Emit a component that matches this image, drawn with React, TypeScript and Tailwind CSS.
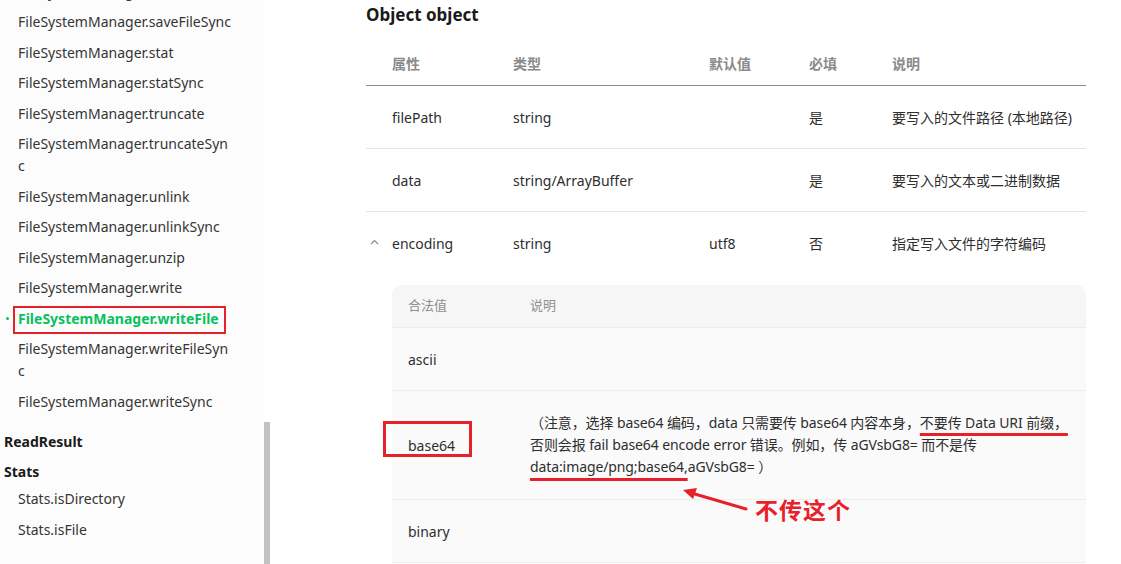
import React from 'react';

const FONT = '"Noto Sans", "Noto Sans CJK SC", sans-serif';

type NavItem = { label: React.ReactNode; active?: boolean };

const navItems: NavItem[] = [
  { label: 'FileSystemManager.saveFile' },
  { label: 'FileSystemManager.saveFileSync' },
  { label: 'FileSystemManager.stat' },
  { label: 'FileSystemManager.statSync' },
  { label: 'FileSystemManager.truncate' },
  { label: <>FileSystemManager.truncateSyn<br />c</> },
  { label: 'FileSystemManager.unlink' },
  { label: 'FileSystemManager.unlinkSync' },
  { label: 'FileSystemManager.unzip' },
  { label: 'FileSystemManager.write' },
  { label: 'FileSystemManager.writeFile', active: true },
  { label: <>FileSystemManager.writeFileSyn<br />c</> },
  { label: 'FileSystemManager.writeSync' },
];

function Sidebar() {
  return (
    <aside className="w-[264px] shrink-0 bg-[#fcfcfc] text-[14px] text-[#353535] overflow-hidden">
      <ul className="-mt-[23.75px]">
        {navItems.map((item, i) => (
          <li key={i} className="relative pl-[18px] py-[4.25px] leading-[22px] whitespace-nowrap">
            {item.active ? (
              <>
                <span className="absolute left-[6px] top-[14px] w-[3px] h-[3px] rounded-full bg-[#07c160]" />
                <span className="relative font-bold text-[#07c160]">
                  FileSystemManager.writeFile
                  {/* annotation box */}
                  <span className="absolute -left-[5px] -top-[3px] w-[213px] h-[28px] border-[2.5px] border-[#e8202a]" />
                </span>
              </>
            ) : (
              item.label
            )}
          </li>
        ))}
      </ul>
      <div className="mt-[10px] pl-[4px] py-[4px] leading-[22px] font-bold text-[#1a1a1a]">ReadResult</div>
      <div className="pl-[4px] pt-[4px] pb-[1px] leading-[22px] font-bold text-[#1a1a1a]">Stats</div>
      <ul>
        <li className="pl-[18px] py-[4.25px] leading-[22px]">Stats.isDirectory</li>
        <li className="pl-[18px] py-[4.25px] leading-[22px]">Stats.isFile</li>
      </ul>
    </aside>
  );
}

function ScrollTrack() {
  return (
    <div className="w-[6px] shrink-0 flex flex-col">
      <div className="h-[422px]" />
      <div className="flex-1 bg-[#c1c1c1]" />
    </div>
  );
}

const COLS = 'grid grid-cols-[147px_196px_100px_83px_1fr] items-center';

function Chevron() {
  return (
    <svg className="absolute left-[4px] top-[27px]" width="9" height="6" viewBox="0 0 9 6" fill="none">
      <polyline points="1,5 4.5,1.5 8,5" stroke="#8a8a8a" strokeWidth="1.2" />
    </svg>
  );
}

function MainTable() {
  const rows = [
    { name: 'filePath', type: 'string', def: '', req: '是', desc: '要写入的文件路径 (本地路径)' },
    { name: 'data', type: 'string/ArrayBuffer', def: '', req: '是', desc: '要写入的文本或二进制数据' },
  ];
  return (
    <div className="w-[720px] text-[14px] text-[#2e2e2e]">
      <div className={`${COLS} mt-[11px] h-[45px] border-b border-[#8c8c8c] font-semibold text-[#8a8a8a]`}>
        <div className="pl-[26px]">属性</div>
        <div>类型</div>
        <div>默认值</div>
        <div>必填</div>
        <div>说明</div>
      </div>
      {rows.map((r) => (
        <div key={r.name} className={`${COLS} h-[63px] border-b border-[#e5e5e5]`}>
          <div className="pl-[26px]">{r.name}</div>
          <div>{r.type}</div>
          <div>{r.def}</div>
          <div>{r.req}</div>
          <div>{r.desc}</div>
        </div>
      ))}
      <div className={`${COLS} relative h-[62px]`}>
        <Chevron />
        <div className="pl-[26px]">encoding</div>
        <div>string</div>
        <div>utf8</div>
        <div>否</div>
        <div>指定写入文件的字符编码</div>
      </div>
      <EnumTable />
    </div>
  );
}

function EnumTable() {
  return (
    <div className="ml-[26px] mt-[11px] rounded-t-[10px] bg-[#fafafa]">
      <div className="grid grid-cols-[138px_1fr] items-center h-[43px] rounded-t-[10px] bg-[#f6f6f6] border-b border-[#ececec] text-[13px] text-[#8f8f8f]">
        <div className="pl-[16px]">合法值</div>
        <div>说明</div>
      </div>
      <div className="grid grid-cols-[138px_1fr] items-center h-[63px] border-b border-[#ededed]">
        <div className="pl-[16px]">ascii</div>
        <div />
      </div>
      <div className="grid grid-cols-[138px_1fr] items-center h-[109px] border-b border-[#ededed]">
        <div className="pl-[16px] relative">
          base64
          {/* annotation box */}
          <span className="absolute left-[-9px] top-[-14px] w-[89px] h-[36px] border-[3px] border-[#e8202a]" />
        </div>
        <div className="leading-[22px] whitespace-nowrap tracking-[-0.1px]">
          （注意，选择 base64 编码，data 只需要传 base64 内容本身，
          <span className="underline decoration-[#e8202a] decoration-[2.5px] underline-offset-[5px]">不要传 Data URI 前缀，</span>
          <br />
          否则会报 fail base64 encode error 错误。例如，传 aGVsbG8= 而不是传
          <br />
          <span className="underline decoration-[#e8202a] decoration-[2.5px] underline-offset-[6px]">data:image/png;base64,</span>
          aGVsbG8= ）
        </div>
      </div>
      <div className="grid grid-cols-[138px_1fr] items-center h-[63px] border-b border-[#ededed]">
        <div className="pl-[16px]">binary</div>
        <div />
      </div>
    </div>
  );
}

function Annotation() {
  return (
    <div className="absolute left-[680px] top-[486px] flex items-start">
      <svg width="70" height="28" viewBox="0 0 70 28" fill="none">
        <line x1="66" y1="23" x2="8" y2="6" stroke="#e8202a" strokeWidth="3" strokeLinecap="round" />
        <polygon points="3,4 17,2 13,13" fill="#e8202a" />
      </svg>
      <span className="ml-[5px] mt-[9px] text-[23px] leading-[30px] font-bold text-[#e8202a] tracking-[1px]">不传这个</span>
    </div>
  );
}

export default function App() {
  return (
    <div className="relative flex w-[1121px] h-[564px] overflow-hidden bg-white" style={{ fontFamily: FONT }}>
      <Sidebar />
      <ScrollTrack />
      <main className="flex-1 pl-[96px]">
        <h3 className="text-[17px] leading-[30px] font-bold text-[#1a1a1a]">Object object</h3>
        <MainTable />
      </main>
      <Annotation />
    </div>
  );
}
